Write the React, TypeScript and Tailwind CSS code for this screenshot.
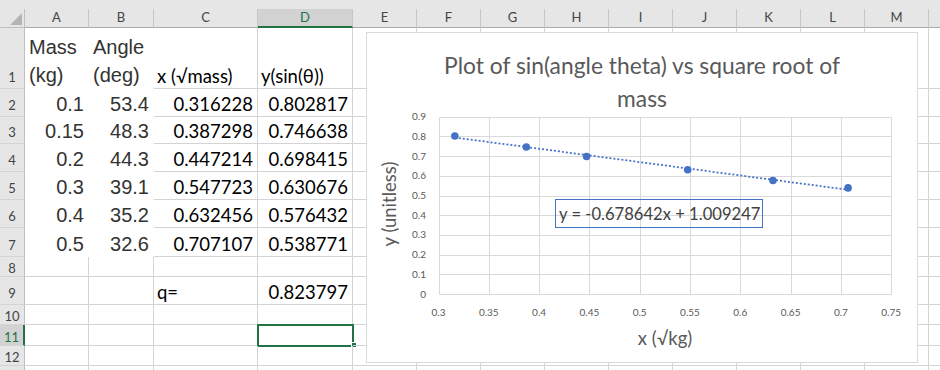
import React from "react";

type Col = { k: string; w: string; label: string };
const cols: Col[] = [
  { k: "A", w: "w-[64px]", label: "A" },
  { k: "B", w: "w-[65px]", label: "B" },
  { k: "C", w: "w-[104px]", label: "C" },
  { k: "D", w: "w-[95px]", label: "D" },
  { k: "E", w: "w-[64px]", label: "E" },
  { k: "F", w: "w-[64px]", label: "F" },
  { k: "G", w: "w-[64px]", label: "G" },
  { k: "H", w: "w-[64px]", label: "H" },
  { k: "I", w: "w-[64px]", label: "I" },
  { k: "J", w: "w-[64px]", label: "J" },
  { k: "K", w: "w-[64px]", label: "K" },
  { k: "L", w: "w-[64px]", label: "L" },
  { k: "M", w: "w-[64px]", label: "M" },
  { k: "N", w: "w-[64px]", label: "" },
];

type Row = { n: number; h: string; pb: string; label: string };
const rows: Row[] = [
  { n: 1, h: "h-[61px]", pb: "pb-[3px]", label: "1" },
  { n: 2, h: "h-[28px]", pb: "pb-[3px]", label: "2" },
  { n: 3, h: "h-[27px]", pb: "pb-[3px]", label: "3" },
  { n: 4, h: "h-[28px]", pb: "pb-[3px]", label: "4" },
  { n: 5, h: "h-[28px]", pb: "pb-[3px]", label: "5" },
  { n: 6, h: "h-[28px]", pb: "pb-[3px]", label: "6" },
  { n: 7, h: "h-[29px]", pb: "pb-[3px]", label: "7" },
  { n: 8, h: "h-[20px]", pb: "pb-[0px]", label: "8" },
  { n: 9, h: "h-[28px]", pb: "pb-[3px]", label: "9" },
  { n: 10, h: "h-[20px]", pb: "pb-[0px]", label: "10" },
  { n: 11, h: "h-[21px]", pb: "pb-[0px]", label: "11" },
  { n: 12, h: "h-[20px]", pb: "pb-[0px]", label: "12" },
  { n: 13, h: "h-[20px]", pb: "pb-[0px]", label: "" },
];

const data: Record<number, { A?: string | string[]; B?: string | string[]; C?: string; D?: string }> = {
  1: { A: ["Mass", "(kg)"], B: ["Angle", "(deg)"], C: "x (√mass)", D: "y(sin(θ))" },
  2: { A: "0.1", B: "53.4", C: "0.316228", D: "0.802817" },
  3: { A: "0.15", B: "48.3", C: "0.387298", D: "0.746638" },
  4: { A: "0.2", B: "44.3", C: "0.447214", D: "0.698415" },
  5: { A: "0.3", B: "39.1", C: "0.547723", D: "0.630676" },
  6: { A: "0.4", B: "35.2", C: "0.632456", D: "0.576432" },
  7: { A: "0.5", B: "32.6", C: "0.707107", D: "0.538771" },
  9: { C: "q=", D: "0.823797" },
};

function Cell({ row, col }: { row: Row; col: Col }) {
  const filled = (col.k === "A" || col.k === "B") && row.n <= 7;
  const v = data[row.n]?.[col.k as "A" | "B" | "C" | "D"];
  const base = `${col.w} shrink-0 h-full relative flex items-end ${filled ? "bg-white" : "border-r border-b border-[#d4d4d4]"}`;
  const selected = row.n === 11 && col.k === "D";

  let content: React.ReactNode = null;
  if (Array.isArray(v)) {
    content = (
      <div className="pl-[4px] font-['Liberation_Sans',sans-serif] text-[20px] leading-[28px] text-[#333333] whitespace-nowrap">
        {v.map((t) => (
          <div key={t}>{t}</div>
        ))}
      </div>
    );
  } else if (typeof v === "string") {
    if (col.k === "A" || col.k === "B") {
      content = (
        <div className="w-full text-right pr-[5px] font-['Liberation_Sans',sans-serif] text-[20px] leading-[26px] text-[#333333] whitespace-nowrap">
          {v}
        </div>
      );
    } else {
      const left = !/^[0-9.]+$/.test(v);
      content = (
        <div
          className={`w-full pb-[1px] font-['Lato',sans-serif] text-[18.5px] leading-[22px] text-black whitespace-nowrap ${
            left ? "text-left pl-[3px]" : "text-right pr-[4px]"
          }`}
        >
          {v}
        </div>
      );
    }
  }

  return (
    <div className={base}>
      {content}
      {selected && (
        <>
          <div className="absolute -left-[1px] -top-[1px] w-[97px] h-[23px] border-2 border-[#217346]" />
          <div className="absolute left-[93px] top-[17px] w-[6px] h-[6px] bg-[#217346] border border-white" />
        </>
      )}
    </div>
  );
}

const X0 = 72.5;
const XS = 1006;
const Y0 = 262;
const YS = 196.9;
const xp = (v: number) => X0 + (v - 0.3) * XS;
const yp = (v: number) => Y0 - v * YS;
const crisp = (p: number) => Math.round(p) + 0.5;

const pts: [number, number][] = [
  [0.316228, 0.802817],
  [0.387298, 0.746638],
  [0.447214, 0.698415],
  [0.547723, 0.630676],
  [0.632456, 0.576432],
  [0.707107, 0.538771],
];

const xTicks = ["0.3", "0.35", "0.4", "0.45", "0.5", "0.55", "0.6", "0.65", "0.7", "0.75"];
const yTicks = ["0", "0.1", "0.2", "0.3", "0.4", "0.5", "0.6", "0.7", "0.8", "0.9"];

function Chart() {
  const trend = (x: number) => -0.678642 * x + 1.009247;
  const top = crisp(yp(0.9));
  const bottom = crisp(yp(0));
  const left = crisp(xp(0.3));
  const right = crisp(xp(0.75));
  return (
    <div className="absolute left-[366px] top-[32px] w-[552px] h-[331px] bg-white border border-[#d9d9d9]">
      <svg
        width={552}
        height={331}
        className="absolute -left-[1px] -top-[1px] overflow-visible font-['Lato',sans-serif]"
      >
        <text x={276} y={42} textAnchor="middle" fontSize={22.8} fill="#595959">
          Plot of sin(angle theta) vs square root of
        </text>
        <text x={276} y={74.5} textAnchor="middle" fontSize={22.8} fill="#595959">
          mass
        </text>

        {xTicks.map((t) => {
          const x = crisp(xp(parseFloat(t)));
          return <line key={"vx" + t} x1={x} x2={x} y1={top} y2={bottom} stroke="#d9d9d9" strokeWidth={1} />;
        })}
        {yTicks.map((t) => {
          const y = crisp(yp(parseFloat(t)));
          return <line key={"hy" + t} x1={left} x2={right} y1={y} y2={y} stroke="#d9d9d9" strokeWidth={1} />;
        })}

        {yTicks.map((t) => (
          <text key={"ly" + t} x={60} y={yp(parseFloat(t)) + 3.5} textAnchor="end" fontSize={10} fill="#595959">
            {t}
          </text>
        ))}
        {xTicks.map((t) => (
          <text key={"lx" + t} x={xp(parseFloat(t))} y={284} textAnchor="middle" fontSize={10} fill="#595959">
            {t}
          </text>
        ))}

        <text transform="translate(30,172) rotate(-90)" textAnchor="middle" fontSize={18.5} fill="#595959">
          y (unitless)
        </text>
        <text x={299} y={313} textAnchor="middle" fontSize={18.5} fill="#595959">
          x (√kg)
        </text>

        <line
          x1={xp(pts[0][0])}
          y1={yp(trend(pts[0][0]))}
          x2={xp(pts[5][0])}
          y2={yp(trend(pts[5][0]))}
          stroke="#4472C4"
          strokeWidth={1.75}
          strokeDasharray="2 2"
        />
        {pts.map(([x, y]) => (
          <circle key={x} cx={xp(x)} cy={yp(y)} r={3.8} fill="#4472C4" />
        ))}

        <rect x={189.5} y={167.5} width={207} height={28} fill="none" stroke="#4472C4" strokeWidth={1} />
        <text x={193} y={188} fontSize={16.6} fill="#404040">
          y = -0.678642x + 1.009247
        </text>
      </svg>
    </div>
  );
}

export default function App() {
  return (
    <div className="relative w-[940px] h-[370px] overflow-hidden bg-white select-none">
      <div className="h-[9px] bg-[#e6e6e6]" />
      <div className="flex h-[19px] bg-[#e6e6e6]">
        <div className="w-[25px] shrink-0 h-full relative border-r border-b border-[#bfbfbf]">
          <svg width={25} height={19} className="absolute left-0 top-0">
            <polygon points="22,4 22,16 10,16" fill="#b4b4b4" />
          </svg>
        </div>
        {cols.map((c) => {
          const sel = c.k === "D";
          return (
            <div
              key={c.k}
              className={`${c.w} shrink-0 h-full flex items-center justify-center font-['Lato',sans-serif] text-[13px] border-r border-[#c6c6c6] ${
                sel
                  ? "bg-[#d2d2d2] text-[#217346] border-b-2 border-b-[#217346]"
                  : "text-[#444444] border-b border-b-[#ababab]"
              }`}
            >
              {c.label}
            </div>
          );
        })}
      </div>
      {rows.map((r) => {
        const sel = r.n === 11;
        return (
          <div key={r.n} className={`flex ${r.h}`}>
            <div
              className={`w-[25px] shrink-0 h-full flex items-end justify-center font-['Lato',sans-serif] text-[13px] leading-[16px] border-b border-b-[#d4d4d4] ${r.pb} ${
                sel
                  ? "bg-[#d2d2d2] text-[#217346] border-r-2 border-r-[#217346]"
                  : "bg-[#e6e6e6] text-[#444444] border-r border-r-[#bfbfbf]"
              }`}
            >
              {r.label}
            </div>
            {cols.map((c) => (
              <Cell key={c.k} row={r} col={c} />
            ))}
          </div>
        );
      })}
      <Chart />
    </div>
  );
}
